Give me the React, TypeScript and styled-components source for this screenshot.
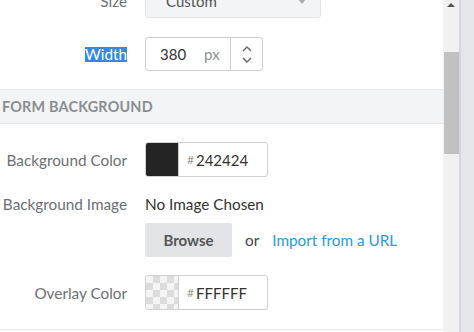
import React from "react";
import styled, { createGlobalStyle } from "styled-components";

const Global = createGlobalStyle`
  html, body { margin: 0; padding: 0; background: #fff; overflow: hidden; }
  body { font-family: "Lato", "Open Sans", sans-serif; }
  * { box-sizing: border-box; }
`;

const Frame = styled.div`
  display: flex;
  width: 474px;
  height: 332px;
  overflow: hidden;
`;

const Panel = styled.div`
  width: 443px;
  height: 332px;
  overflow: hidden;
`;

const Content = styled.div`
  display: flex;
  flex-direction: column;
  margin-top: -16px;
  border-bottom: 1px solid #e6e8ea;
  height: 346px;
`;

const Row = styled.div<{ $mt?: number }>`
  display: grid;
  grid-template-columns: 127px auto;
  column-gap: 18px;
  align-items: center;
  margin-top: ${(p) => p.$mt ?? 0}px;
`;

const Label = styled.label<{ $selected?: boolean }>`
  justify-self: end;
  font-size: 15.3px;
  color: #6c6f73;
  white-space: nowrap;
  ${(p) =>
    p.$selected
      ? `background: #3a86e0; color: #fff; line-height: 15px;`
      : ""}
`;

const Select = styled.div`
  width: 176px;
  height: 34px;
  background: #f3f4f5;
  border: 1px solid #e2e4e6;
  border-radius: 3px;
  display: flex;
  align-items: center;
  justify-content: space-between;
  padding: 0 14px 0 20px;
  font-size: 15px;
  color: #555;
`;

const Caret = styled.span`
  width: 0;
  height: 0;
  border-left: 4px solid transparent;
  border-right: 4px solid transparent;
  border-top: 5px solid #aaa;
`;

const NumberBox = styled.div`
  width: 118px;
  height: 34px;
  border: 1px solid #cfd1d4;
  border-radius: 3px;
  display: flex;
  align-items: stretch;
  font-size: 15px;
`;

const NumValue = styled.span`
  width: 85px;
  display: flex;
  align-items: center;
  padding-left: 14px;
  color: #333;
  gap: 18px;
  border-right: 1px solid #cfd1d4;
`;

const Unit = styled.span`
  color: #8c8f93;
`;

const Spinner = styled.div`
  flex: 1;
  display: flex;
  flex-direction: column;
  align-items: center;
  justify-content: center;
  gap: 5px;
`;

const SectionHeader = styled.div`
  margin-top: 18px;
  height: 35px;
  background: #f3f4f5;
  border-top: 1px solid #e8e9eb;
  border-bottom: 1px solid #e8e9eb;
  display: flex;
  align-items: center;
  padding-left: 2px;
  font-size: 14.4px;
  font-weight: 700;
  color: #8b8e91;
  letter-spacing: 0.2px;
`;

const ColorBox = styled.div`
  width: 123px;
  height: 35px;
  border: 1px solid #cfd1d4;
  border-radius: 3px;
  display: flex;
  align-items: stretch;
  overflow: hidden;
`;

const Swatch = styled.div<{ $color?: string }>`
  width: 33px;
  border-right: 1px solid #cfd1d4;
  background: ${(p) => p.$color ?? "#fff"};
`;

const Checker = styled.div`
  width: 33px;
  border-right: 1px solid #cfd1d4;
  background-color: #f4f4f4;
  background-image:
    linear-gradient(45deg, #dcdcdc 25%, transparent 25%, transparent 75%, #dcdcdc 75%),
    linear-gradient(45deg, #dcdcdc 25%, transparent 25%, transparent 75%, #dcdcdc 75%);
  background-size: 14px 14px;
  background-position: 0 0, 7px 7px;
`;

const Hex = styled.div`
  display: flex;
  align-items: center;
  padding-left: 8px;
  font-size: 15px;
  color: #333;
  gap: 2px;
`;

const Hash = styled.span`
  font-size: 12px;
  color: #999;
`;

const PlainText = styled.span`
  font-size: 15.3px;
  color: #333;
`;

const Actions = styled.div`
  display: flex;
  align-items: center;
  gap: 13px;
`;

const Browse = styled.button`
  width: 87px;
  height: 34px;
  border: none;
  border-radius: 2px;
  background: #e2e4e7;
  font-family: inherit;
  font-size: 15px;
  font-weight: 700;
  color: #555;
  padding: 0;
`;

const Or = styled.span`
  font-size: 15.3px;
  color: #444;
`;

const Link = styled.a`
  font-size: 15.3px;
  color: #2b9ad6;
  text-decoration: none;
`;

const Scrollbar = styled.div`
  width: 16px;
  height: 332px;
  background: #f1f1f1;
  display: flex;
  flex-direction: column;
  align-items: center;
`;

const ArrowUp = styled.div`
  margin-top: 3px;
  width: 0;
  height: 0;
  border-left: 4px solid transparent;
  border-right: 4px solid transparent;
  border-bottom: 4px solid #555;
`;

const Thumb = styled.div`
  margin-top: 45px;
  width: 15px;
  height: 102px;
  background: #c1c1c1;
`;

const Edge = styled.div`
  flex: 1;
  background: #e4e6e9;
  border-left: 2px solid #d4d6d9;
`;

const Chevron = ({ up }: { up?: boolean }) => (
  <svg width="10" height="6" viewBox="0 0 10 6">
    <path
      d={up ? "M1 5 L5 1 L9 5" : "M1 1 L5 5 L9 1"}
      fill="none"
      stroke="#666"
      strokeWidth="1.4"
    />
  </svg>
);

export default function App() {
  return (
    <>
      <Global />
      <Frame>
        <Panel>
          <Content>
            <Row>
              <Label>Size</Label>
              <Select>
                Custom
                <Caret />
              </Select>
            </Row>
            <Row $mt={19}>
              <Label $selected>Width</Label>
              <NumberBox>
                <NumValue>
                  380 <Unit>px</Unit>
                </NumValue>
                <Spinner>
                  <Chevron up />
                  <Chevron />
                </Spinner>
              </NumberBox>
            </Row>
            <SectionHeader>FORM BACKGROUND</SectionHeader>
            <Row $mt={18}>
              <Label>Background Color</Label>
              <ColorBox>
                <Swatch $color="#242424" />
                <Hex>
                  <Hash>#</Hash>242424
                </Hex>
              </ColorBox>
            </Row>
            <Row $mt={18}>
              <Label>Background Image</Label>
              <PlainText>No Image Chosen</PlainText>
            </Row>
            <Row $mt={10}>
              <span />
              <Actions>
                <Browse>Browse</Browse>
                <Or>or</Or>
                <Link>Import from a URL</Link>
              </Actions>
            </Row>
            <Row $mt={18}>
              <Label>Overlay Color</Label>
              <ColorBox>
                <Checker />
                <Hex>
                  <Hash>#</Hash>FFFFFF
                </Hex>
              </ColorBox>
            </Row>
          </Content>
        </Panel>
        <Scrollbar>
          <ArrowUp />
          <Thumb />
        </Scrollbar>
        <Edge />
      </Frame>
    </>
  );
}
